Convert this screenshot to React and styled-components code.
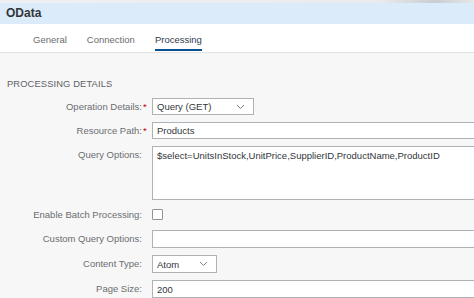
import styled, { createGlobalStyle } from 'styled-components';

const GlobalStyle = createGlobalStyle`
  html, body {
    margin: 0;
    padding: 0;
    background: #f7f7f7;
  }
  body {
    font-family: "Liberation Sans", Arial, sans-serif;
  }
`;

const Page = styled.div`
  width: 474px;
  height: 298px;
  overflow: hidden;
  display: flex;
  flex-direction: column;
  background: #f7f7f7;
`;

const TopStrip = styled.div`
  height: 3px;
  background: linear-gradient(90deg, #eef0f2 0%, #e9ebee 80%, #c9cdd2 92%, #e6e8eb 100%);
`;

const Header = styled.div`
  height: 21px;
  display: flex;
  align-items: center;
  padding-left: 6px;
  background: #dcebf9;
  color: #32363a;
  font-size: 12px;
  font-weight: bold;
`;

const TabBar = styled.div`
  height: 29px;
  display: flex;
  gap: 20px;
  padding-left: 33px;
  background: #fff;
  border-bottom: 1px solid #e2e2e2;
`;

const Tab = styled.div`
  display: flex;
  align-items: center;
  padding-top: 6px;
  font-size: 9.5px;
  color: ${p => (p.$active ? '#2f3d4c' : '#6a6d70')};
  border-bottom: 2px solid ${p => (p.$active ? '#0a4f8f' : 'transparent')};
  margin-bottom: 1px;
`;

const Content = styled.div`
  flex: 1;
  padding: 25px 0 0 7px;
`;

const SectionTitle = styled.div`
  font-size: 9.4px;
  color: #5e6166;
  letter-spacing: 0.1px;
  height: 12px;
  line-height: 12px;
`;

const Form = styled.div`
  margin-top: 8px;
  margin-left: -7px;
  display: grid;
  grid-template-columns: 142px 10px 340px;
  row-gap: 7px;
  align-items: start;
`;

const Label = styled.div`
  text-align: right;
  font-size: 9.5px;
  color: #6a6d70;
  height: ${p => p.$h || 17}px;
  line-height: ${p => p.$h || 17}px;
  white-space: nowrap;
`;

const Star = styled.div`
  color: #c40000;
  font-size: 9.5px;
  line-height: 17px;
  padding-left: 1px;
`;

const Box = styled.div`
  box-sizing: border-box;
  height: ${p => p.$h || 17}px;
  width: ${p => (p.$w ? `${p.$w}px` : '100%')};
  border: 1px solid #aeb3b8;
  background: #fff;
  font-size: 9.5px;
  color: #32363a;
  padding: 0 4px;
  display: flex;
  align-items: ${p => (p.$multi ? 'flex-start' : 'center')};
  padding-top: ${p => (p.$multi ? '3px' : '0')};
  justify-content: space-between;
  white-space: nowrap;
`;

const Check = styled.div`
  box-sizing: border-box;
  width: 11px;
  height: 11px;
  margin-top: 2px;
  border: 1px solid #8e949a;
  border-radius: 1px;
  background: #fff;
`;

const Chevron = () => (
  <svg width="9" height="6" viewBox="0 0 9 6" style={{ marginRight: 4 }}>
    <path d="M1 1 L4.5 4.5 L8 1" fill="none" stroke="#7b8086" strokeWidth="1" />
  </svg>
);

function Row({ label, required, children, h }) {
  return (
    <>
      <Label $h={h}>{label}</Label>
      <Star>{required ? '*' : ''}</Star>
      <div>{children}</div>
    </>
  );
}

export default function App() {
  return (
    <Page>
      <GlobalStyle />
      <TopStrip />
      <Header>OData</Header>
      <TabBar>
        <Tab>General</Tab>
        <Tab>Connection</Tab>
        <Tab $active>Processing</Tab>
      </TabBar>
      <Content>
        <SectionTitle>PROCESSING DETAILS</SectionTitle>
        <Form>
          <Row label="Operation Details:" required>
            <Box $w={102}>
              <span>Query (GET)</span>
              <Chevron />
            </Box>
          </Row>
          <Row label="Resource Path:" required>
            <Box>Products</Box>
          </Row>
          <Row label="Query Options:">
            <Box $h={54} $multi>
              $select=UnitsInStock,UnitPrice,SupplierID,ProductName,ProductID
            </Box>
          </Row>
          <Row label="Enable Batch Processing:" h={16}>
            <Check />
          </Row>
          <Row label="Custom Query Options:" h={18}>
            <Box $h={18} />
          </Row>
          <Row label="Content Type:" h={18}>
            <Box $w={65} $h={18}>
              <span>Atom</span>
              <Chevron />
            </Box>
          </Row>
          <Row label="Page Size:" h={18}>
            <Box $h={18}>200</Box>
          </Row>
        </Form>
      </Content>
    </Page>
  );
}
